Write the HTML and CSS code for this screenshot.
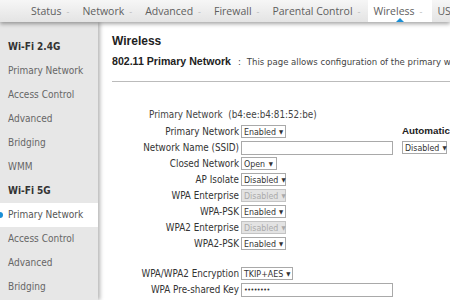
FILE: index.html
```html
<!DOCTYPE html>
<html>
<head>
<meta charset="utf-8">
<link rel="stylesheet" href="styles.css">
</head>
<body>
<div class="topnav">
  <div class="tab">Status<span class="dash">-</span></div>
  <div class="tab">Network<span class="dash">-</span></div>
  <div class="tab">Advanced<span class="dash">-</span></div>
  <div class="tab">Firewall<span class="dash">-</span></div>
  <div class="tab">Parental Control<span class="dash">-</span></div>
  <div class="tab active">Wireless<span class="dash">-</span><span class="caret"></span></div>
  <div class="tab">US</div>
</div>
<div class="wrap">
  <div class="side">
    <div class="sh">Wi-Fi 2.4G</div>
    <div class="si">Primary Network</div>
    <div class="si">Access Control</div>
    <div class="si">Advanced</div>
    <div class="si">Bridging</div>
    <div class="si">WMM</div>
    <div class="sh">Wi-Fi 5G</div>
    <div class="si on"><span class="dot"></span>Primary Network</div>
    <div class="si">Access Control</div>
    <div class="si">Advanced</div>
    <div class="si">Bridging</div>
  </div>
  <div class="main">
    <div class="title">Wireless</div>
    <div class="desc"><b>802.11 Primary Network</b><span class="colon">:</span>This page allows configuration of the primary w</div>
    <div class="rule"></div>
    <div class="form">
      <div class="head">Primary Network &nbsp;(b4:ee:b4:81:52:be)</div>
      <div class="lbl">Primary Network</div>
      <div class="ctl"><span class="sel w44">Enabled<i>&#9660;</i></span></div>
      <div class="extra"><b class="auto">Automatic</b></div>
      <div class="lbl">Network Name (SSID)</div>
      <div class="ctl"><span class="inp"></span></div>
      <div class="extra"><span class="sel w44">Disabled<i>&#9660;</i></span></div>
      <div class="lbl">Closed Network</div>
      <div class="ctl"><span class="sel w35">Open<i>&#9660;</i></span></div>
      <div class="lbl">AP Isolate</div>
      <div class="ctl"><span class="sel w44">Disabled<i>&#9660;</i></span></div>
      <div class="lbl">WPA Enterprise</div>
      <div class="ctl"><span class="sel w44 dis">Disabled<i>&#9660;</i></span></div>
      <div class="lbl">WPA-PSK</div>
      <div class="ctl"><span class="sel w44">Enabled<i>&#9660;</i></span></div>
      <div class="lbl">WPA2 Enterprise</div>
      <div class="ctl"><span class="sel w44 dis">Disabled<i>&#9660;</i></span></div>
      <div class="lbl">WPA2-PSK</div>
      <div class="ctl"><span class="sel w44">Enabled<i>&#9660;</i></span></div>
      <div class="gap"></div>
      <div class="lbl">WPA/WPA2 Encryption</div>
      <div class="ctl"><span class="sel w52">TKIP+AES<i>&#9660;</i></span></div>
      <div class="lbl">WPA Pre-shared Key</div>
      <div class="ctl"><span class="inp pw">&bull;&bull;&bull;&bull;&bull;&bull;&bull;&bull;</span></div>
    </div>
  </div>
</div>
</body>
</html>
```
FILE: styles.css
```css
* { box-sizing: border-box; }
html, body { margin: 0; padding: 0; }
body {
  width: 450px; height: 300px; overflow: hidden;
  background: #fff;
  font-family: "DejaVu Sans Condensed", "DejaVu Sans", sans-serif;
  color: #333;
}
.topnav {
  position: relative; z-index: 2;
  height: 22px;
  display: flex;
  padding-left: 26px;
  background: linear-gradient(#f6f6f6, #e4e4e4);
  box-shadow: 0 2px 4px rgba(0,0,0,0.35);
  white-space: nowrap;
  overflow: hidden;
}
.tab {
  position: relative;
  flex: none;
  padding: 0 8px 0 5px;
  line-height: 23px;
  font-family: "Open Sans", sans-serif;
  font-size: 10.5px;
  color: #5e5e5e;
}
.tab .dash { color: #bbb; margin-left: 5px; font-size: 9px; }
.tab.active { background: #fff; padding-right: 10px; }
.caret {
  position: absolute; left: 28px; bottom: 0;
  width: 0; height: 0;
  border-left: 4px solid transparent; border-right: 4px solid transparent;
  border-bottom: 4px solid #1a8fd6;
}
.wrap { display: flex; height: 278px; }
.side {
  position: relative; z-index: 1;
  width: 98px; flex: none;
  background: #e7e7e7;
  box-shadow: 2px 0 4px rgba(0,0,0,0.3);
  padding-top: 13px;
}
.sh, .si {
  position: relative;
  height: 24px; line-height: 24px;
  padding-left: 8px;
  font-size: 10px;
  color: #666;
  white-space: nowrap;
}
.sh { font-weight: bold; color: #333; font-size: 10px; }
.si.on { background: #fff; color: #555; }
.dot {
  position: absolute; left: -3px; top: 9px;
  width: 6px; height: 6px; border-radius: 50%;
  background: #1a8fd6;
}
.main {
  flex: 1; min-width: 0;
  padding: 12px 0 0 14px;
  overflow: hidden;
}
.title {
  font-family: "Liberation Sans", Arial, sans-serif;
  font-weight: bold; font-size: 12px; color: #222;
  line-height: 14px;
}
.desc {
  margin-top: 6px;
  font-size: 9.5px; color: #444;
  white-space: nowrap; line-height: 14px;
}
.desc b { font-family: "Liberation Sans", Arial, sans-serif; font-size: 10.6px; color: #222; }
.colon { margin: 0 6px 0 7px; }
.rule { margin-top: 12px; border-top: 1px solid #bbb; }
.form {
  margin-top: 26px;
  display: grid;
  grid-template-columns: 127px 152px auto;
  column-gap: 2px;
  font-size: 9.8px;
  color: #333;
}
.head { grid-column: 1 / 4; padding-left: 37px; height: 17px; line-height: 14px; color: #444; }
.lbl { grid-column: 1; text-align: right; height: 16px; line-height: 14px; white-space: nowrap; }
.ctl { grid-column: 2; height: 16px; }
.extra { grid-column: 3; padding-left: 7px; height: 16px; white-space: nowrap; }
.auto { font-family: "Liberation Sans", Arial, sans-serif; font-size: 9.8px; color: #222; line-height: 12px; }
.gap { grid-column: 1 / 4; height: 14px; }
.sel {
  display: inline-flex; align-items: center; justify-content: space-between;
  height: 13px; padding: 0 3px 0 2px;
  border: 1px solid #a9a9a9; background: #fff;
  font-size: 8.8px; color: #333;
}
.sel i { font-style: normal; font-size: 6px; margin-left: 3px; }
.sel.dis { background: #e3e3e3; color: #aaa; border-color: #c4c4c4; }
.w44 { width: 45px; }
.w35 { width: 36px; }
.w52 { width: 52px; }
.inp {
  display: block; width: 152px; height: 14px;
  border: 1px solid #a9a9a9; background: #fff;
}
.inp.pw { font-size: 7px; line-height: 12px; padding-left: 2px; letter-spacing: -0.5px; }
```
